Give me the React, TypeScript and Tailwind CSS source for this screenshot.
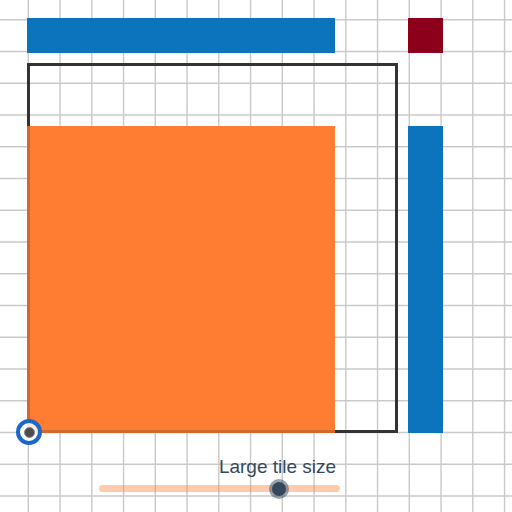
import type {ReactNode} from "react";

const GRID = 31.75;
const X0 = 28.3;
const Y0 = 19.7;

const GridLines = () => {
  const xs = Array.from({length: 16}, (_, i) => X0 + i * GRID);
  const ys = Array.from({length: 16}, (_, i) => Y0 + i * GRID);

  return (
    <svg className="absolute inset-0" width={512} height={512} viewBox="0 0 512 512">
      {xs.map(x => (
        <line key={`x-${x}`} x1={x} y1={0} x2={x} y2={512} stroke="#c9c9c9" strokeWidth={1.4} />
      ))}
      {ys.map(y => (
        <line key={`y-${y}`} x1={0} y1={y} x2={512} y2={y} stroke="#c9c9c9" strokeWidth={1.4} />
      ))}
    </svg>
  );
};

interface TileProps {
  left: number;
  top: number;
  width: number;
  height: number;
  className: string;
  children?: ReactNode;
}

// shapes sit on a free canvas, so their coordinates are the content
const Tile = ({left, top, width, height, className, children}: TileProps) => (
  <div className={`absolute ${className}`} style={{left, top, width, height}}>
    {children}
  </div>
);

const TRACK_WIDTH = 241;

const SizeSlider = ({value}: {value: number}) => {
  const thumbX = value * TRACK_WIDTH;

  return (
    <div className="absolute left-[99px] top-[457px] flex w-[241px] flex-col gap-[9px]">
      <div className="relative h-[19px]">
        <span
          className="absolute top-0 whitespace-nowrap text-[19px] leading-[19px] text-[#34495e] font-['Liberation_Sans',Arial,sans-serif]"
          style={{left: thumbX - 1.5, transform: "translateX(-50%)"}}
        >
          Large tile size
        </span>
      </div>
      <div className="relative h-[7px] rounded-full bg-[#ff7d33]/40">
        <div
          className="absolute top-[-6.5px] flex h-[20px] w-[20px] items-center justify-center rounded-full bg-[#34495e]/50"
          style={{left: thumbX - 10}}
        >
          <div className="h-[14px] w-[14px] rounded-full bg-[#34495e]" />
        </div>
      </div>
    </div>
  );
};

export default function App() {
  return (
    <div className="relative h-[512px] w-[512px] overflow-hidden bg-white">
      <GridLines />

      <Tile left={27} top={18} width={308} height={35} className="bg-[#0b74bd]" />
      <Tile left={408} top={18} width={35} height={35} className="bg-[#8c001c]" />
      <Tile left={27} top={63} width={371} height={370} className="border-[3px] border-[#333333]" />
      <Tile
        left={27}
        top={126}
        width={308}
        height={307}
        className="bg-[#fe7d33] border-l-[3px] border-b-[3px] border-[#cf6a2f]"
      />
      <Tile left={408} top={126} width={35} height={307} className="bg-[#0b74bd]" />

      <Tile
        left={16}
        top={419}
        width={26}
        height={26}
        className="flex items-center justify-center rounded-full border-[4.5px] border-[#1b68c8] bg-white/85"
      >
        <div className="h-[11px] w-[11px] rounded-full border border-[#888] bg-[#4d4d4d]" />
      </Tile>

      <SizeSlider value={0.747} />
    </div>
  );
}
